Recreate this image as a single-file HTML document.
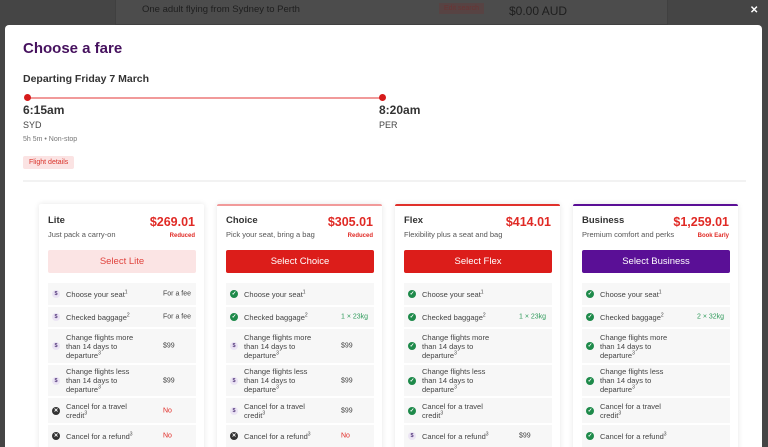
<!DOCTYPE html>
<html><head><style>
*{box-sizing:border-box;margin:0;padding:0}
html,body{width:768px;height:447px;overflow:hidden}
body{background:#454545;font-family:"Liberation Sans",sans-serif;position:relative}
.hdr{position:absolute;left:115px;top:0;width:553px;height:25px;background:#4c4c4c;border:1px solid #404040;border-top:0}
.hdr .t{position:absolute;left:26px;top:4px;font-size:9.5px;color:#1e1e1e}
.hdr .e{position:absolute;left:323px;top:3px;font-size:7px;color:#6a3434;background:#574343;padding:2px 5px}
.hdr .p{position:absolute;left:393px;top:4px;font-size:12px;color:#1e1e1e}
.x{position:absolute;left:750px;top:5px;color:#fff;font-size:10px;font-weight:bold}
.modal{position:absolute;left:5px;top:25px;width:757px;height:422px;background:#fff;border-radius:4px 4px 0 0;overflow:hidden}
h1{position:absolute;left:18px;top:15px;font-size:15px;color:#46115e;font-weight:bold}
.dep{position:absolute;left:18px;top:48px;font-size:10.5px;color:#333;font-weight:bold}
.line{position:absolute;left:23px;top:72px;width:355px;height:1.5px;background:#f19a9a}
.dot{position:absolute;top:69px;width:7px;height:7px;border-radius:50%;background:#d61b1b}
.tm{position:absolute;top:78px;font-size:12px;font-weight:bold;color:#333}
.ap{position:absolute;top:95px;font-size:9px;color:#444}
.dur{position:absolute;left:18px;top:111px;font-size:7px;color:#777}
.fd{position:absolute;left:18px;top:131px;font-size:7px;color:#d9342b;background:#fbe3e3;padding:3px 6px;border-radius:2px}
.sep{position:absolute;left:18px;top:155px;width:723px;height:2px;background:#f2f2f2}
.card{position:absolute;top:179px;width:165px;height:270px;background:#fff;box-shadow:0 0 6px rgba(0,0,0,.1);border-radius:2px}
.card.tb{border-top:2px solid #f19a9a}
.card.tr{border-top:2px solid #e0312b}
.card.tp{border-top:2px solid #5a0f96}
.nm{position:absolute;left:9px;top:9px;font-size:9.5px;font-weight:bold;color:#333}
.pr{position:absolute;right:9px;top:9px;font-size:12.5px;font-weight:bold;color:#e02a25}
.sub{position:absolute;left:9px;top:24px;font-size:7.5px;color:#555}
.tag{position:absolute;right:9px;top:27px;font-size:6px;font-weight:bold;color:#e02a25}
.btn{position:absolute;left:9px;top:44px;width:148px;height:23px;border-radius:2px;font-size:9.5px;text-align:center;line-height:23px;color:#fff;background:#dc1d1a}
.btn.l{background:#fbe4e4;color:#e0443e}
.btn.p{background:#5a0f96}
.rows{position:absolute;left:9px;top:77px;width:148px}
.r{background:#f7f7f7;margin-bottom:2px;position:relative;font-size:7.5px;color:#444;line-height:9px;display:flex;align-items:center;padding-left:18px}
.r .v{position:absolute;left:115px;top:50%;transform:translateY(-50%);font-size:7px;white-space:nowrap}
.r .v.g{color:#2e9a5a}.r .v.n{color:#e02a25}
.r sup{font-size:5px;line-height:0}
.ic{position:absolute;left:4px;top:50%;margin-top:-4px;width:8px;height:8px;border-radius:50%;font-size:5.5px;line-height:8px;text-align:center;font-weight:bold}
.ic.s{background:#ebe4f4;color:#5a3f80}
.ic.c{background:#1e8a4a;color:#fff}
.ic.x{background:#333;color:#fff}
</style></head><body>
<div class="hdr"><span class="t">One adult flying from Sydney to Perth</span><span class="e">Edit search</span><span class="p">$0.00 AUD</span></div>
<div class="x">✕</div>
<div class="modal">
<h1>Choose a fare</h1>
<div class="dep">Departing Friday 7 March</div>
<div class="line"></div>
<div class="dot" style="left:19px"></div><div class="dot" style="left:374px"></div>
<div class="tm" style="left:18px">6:15am</div><div class="tm" style="left:374px">8:20am</div>
<div class="ap" style="left:18px">SYD</div><div class="ap" style="left:374px">PER</div>
<div class="dur">5h 5m • Non-stop</div>
<div class="fd">Flight details</div>
<div class="sep"></div>

<div class="card" style="left:34px;border-top:2px solid #fff">
<div class="nm">Lite</div><div class="pr">$269.01</div><div class="sub">Just pack a carry-on</div><div class="tag">Reduced</div>
<div class="btn l">Select Lite</div>
<div class="rows">
<div class="r" style="height:22px"><span class="ic s">$</span><span>Choose your seat<sup>1</sup></span><span class="v">For a fee</span></div>
<div class="r" style="height:20px"><span class="ic s">$</span><span>Checked baggage<sup>2</sup></span><span class="v">For a fee</span></div>
<div class="r" style="height:34px"><span class="ic s">$</span><span>Change flights more<br>than 14 days to<br>departure<sup>3</sup></span><span class="v">$99</span></div>
<div class="r" style="height:31px"><span class="ic s">$</span><span>Change flights less<br>than 14 days to<br>departure<sup>3</sup></span><span class="v">$99</span></div>
<div class="r" style="height:25px"><span class="ic x">✕</span><span>Cancel for a travel<br>credit<sup>3</sup></span><span class="v n">No</span></div>
<div class="r" style="height:22px"><span class="ic x">✕</span><span>Cancel for a refund<sup>3</sup></span><span class="v n">No</span></div>
</div></div>

<div class="card tb" style="left:212px">
<div class="nm">Choice</div><div class="pr">$305.01</div><div class="sub">Pick your seat, bring a bag</div><div class="tag">Reduced</div>
<div class="btn">Select Choice</div>
<div class="rows">
<div class="r" style="height:22px"><span class="ic c">✓</span><span>Choose your seat<sup>1</sup></span></div>
<div class="r" style="height:20px"><span class="ic c">✓</span><span>Checked baggage<sup>2</sup></span><span class="v g">1 × 23kg</span></div>
<div class="r" style="height:34px"><span class="ic s">$</span><span>Change flights more<br>than 14 days to<br>departure<sup>3</sup></span><span class="v">$99</span></div>
<div class="r" style="height:31px"><span class="ic s">$</span><span>Change flights less<br>than 14 days to<br>departure<sup>3</sup></span><span class="v">$99</span></div>
<div class="r" style="height:25px"><span class="ic s">$</span><span>Cancel for a travel<br>credit<sup>3</sup></span><span class="v">$99</span></div>
<div class="r" style="height:22px"><span class="ic x">✕</span><span>Cancel for a refund<sup>3</sup></span><span class="v n">No</span></div>
</div></div>

<div class="card tr" style="left:390px">
<div class="nm">Flex</div><div class="pr">$414.01</div><div class="sub">Flexibility plus a seat and bag</div>
<div class="btn">Select Flex</div>
<div class="rows">
<div class="r" style="height:22px"><span class="ic c">✓</span><span>Choose your seat<sup>1</sup></span></div>
<div class="r" style="height:20px"><span class="ic c">✓</span><span>Checked baggage<sup>2</sup></span><span class="v g">1 × 23kg</span></div>
<div class="r" style="height:34px"><span class="ic c">✓</span><span>Change flights more<br>than 14 days to<br>departure<sup>3</sup></span></div>
<div class="r" style="height:31px"><span class="ic c">✓</span><span>Change flights less<br>than 14 days to<br>departure<sup>3</sup></span></div>
<div class="r" style="height:25px"><span class="ic c">✓</span><span>Cancel for a travel<br>credit<sup>3</sup></span></div>
<div class="r" style="height:22px"><span class="ic s">$</span><span>Cancel for a refund<sup>3</sup></span><span class="v">$99</span></div>
</div></div>

<div class="card tp" style="left:568px">
<div class="nm">Business</div><div class="pr">$1,259.01</div><div class="sub">Premium comfort and perks</div><div class="tag">Book Early</div>
<div class="btn p">Select Business</div>
<div class="rows">
<div class="r" style="height:22px"><span class="ic c">✓</span><span>Choose your seat<sup>1</sup></span></div>
<div class="r" style="height:20px"><span class="ic c">✓</span><span>Checked baggage<sup>2</sup></span><span class="v g">2 × 32kg</span></div>
<div class="r" style="height:34px"><span class="ic c">✓</span><span>Change flights more<br>than 14 days to<br>departure<sup>3</sup></span></div>
<div class="r" style="height:31px"><span class="ic c">✓</span><span>Change flights less<br>than 14 days to<br>departure<sup>3</sup></span></div>
<div class="r" style="height:25px"><span class="ic c">✓</span><span>Cancel for a travel<br>credit<sup>3</sup></span></div>
<div class="r" style="height:22px"><span class="ic c">✓</span><span>Cancel for a refund<sup>3</sup></span></div>
</div></div>
</div>
</body></html>
